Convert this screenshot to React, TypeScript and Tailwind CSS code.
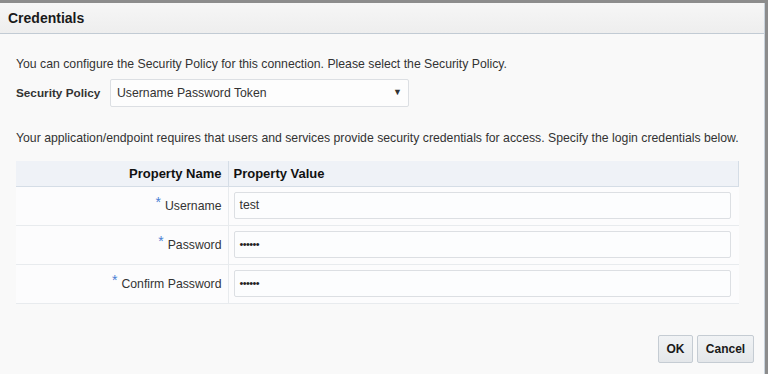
const rows = [
    { label: 'Username', value: 'test', type: 'text' },
    { label: 'Password', value: '••••••', type: 'mask' },
    { label: 'Confirm Password', value: '••••••', type: 'mask' },
];

export default function App() {
    return (
        <div className="w-[768px] h-[374px] bg-[#8c8c8c] pt-[3px] pr-[3px] overflow-hidden" style={{ fontFamily: 'Arial, "Liberation Sans", sans-serif' }}>
            <div className="h-full w-[765px] bg-[#f9f9f9] flex flex-col border-r border-[#c9d3dc]">
                <div className="h-[31px] shrink-0 bg-gradient-to-b from-[#f6f6f6] to-[#eeeeee] border-b border-[#c2cbd4] flex items-center pl-[8px]">
                    <h1 className="text-[14px] font-bold text-[#1a1a1a]">Credentials</h1>
                </div>

                <div className="flex-1 pl-[16px] pr-[10px] pt-[23px] text-[12.25px] text-[#333]">
                    <p className="leading-[15px] whitespace-nowrap">You can configure the Security Policy for this connection. Please select the Security Policy.</p>

                    <div className="flex items-center mt-[7px]">
                        <label className="w-[94px] text-[11.75px] font-bold text-[#333]">Security Policy</label>
                        <div className="w-[299px] h-[28px] bg-[#fdfdfd] border border-[#dcdfe3] rounded-[2px] flex items-center justify-between pl-[6px] pr-[6px]">
                            <span>Username Password Token</span>
                            <span className="text-[9px] text-[#333]">▼</span>
                        </div>
                    </div>

                    <p className="leading-[15px] mt-[24px] whitespace-nowrap">Your application/endpoint requires that users and services provide security credentials for access. Specify the login credentials below.</p>

                    <table className="mt-[15px] w-[723px] border-collapse bg-[#fcfcfd]">
                        <thead>
                            <tr className="h-[25px] bg-[#eff2f7] border-b border-[#d5dde6]">
                                <th className="w-[212px] text-right pr-[6px] text-[13px] font-bold text-[#111] border-r border-[#d5dde6]">Property Name</th>
                                <th className="text-left pl-[5px] text-[13px] font-bold text-[#111] border-r border-[#d5dde6]">Property Value</th>
                            </tr>
                        </thead>
                        <tbody>
                            {rows.map((r) => (
                                <tr key={r.label} className="h-[39px] border-b border-[#e8ebee]">
                                    <td className="text-right pr-[6px] border-r border-[#e8ebee] leading-[15px]">
                                        <span className="text-[14px] text-[#4a7fd4] relative top-[-3px] mr-[4px]">*</span>
                                        <span>{r.label}</span>
                                    </td>
                                    <td className="pl-[5px] pr-[8px]">
                                        <div className="h-[27px] bg-[#fcfdfe] border border-[#dcdfe3] rounded-[2px] flex items-center pl-[5px]">
                                            <span className={r.type === 'mask' ? 'text-[11px] tracking-[-0.6px] text-[#222]' : ''}>{r.value}</span>
                                        </div>
                                    </td>
                                </tr>
                            ))}
                        </tbody>
                    </table>

                    <div className="flex justify-end gap-[4px] mt-[31px]">
                        <button className="w-[35px] h-[28px] bg-gradient-to-b from-[#f1f3f5] to-[#e4e7ea] border border-[#c5ccd3] rounded-[2px] text-[12px] font-bold text-[#1a1a1a]">OK</button>
                        <button className="w-[57px] h-[28px] bg-gradient-to-b from-[#f1f3f5] to-[#e4e7ea] border border-[#c5ccd3] rounded-[2px] text-[12px] font-bold text-[#1a1a1a]">Cancel</button>
                    </div>
                </div>
            </div>
        </div>
    );
}
